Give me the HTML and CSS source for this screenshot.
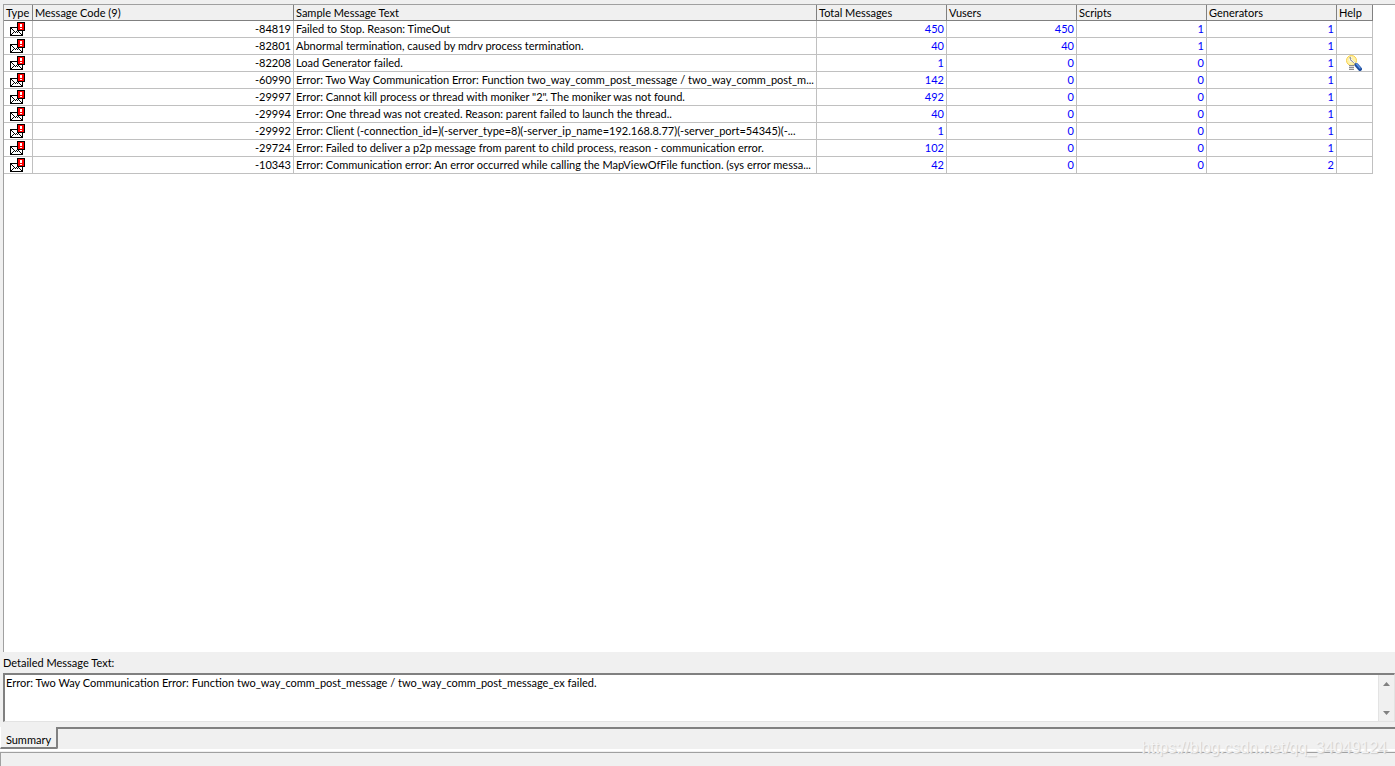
FILE: index.html
```
<!DOCTYPE html>
<html lang="en">
<head>
    <meta charset="UTF-8">
    <meta name="viewport" content="width=device-width, initial-scale=1.0">
    <title>Output - Summary</title>
    <link rel="stylesheet" href="styles.css">
</head>
<body>

    <!-- shared icons -->
    <svg class="sprite" aria-hidden="true">
        <symbol id="icon-error" viewBox="0 0 16 16">
            <g shape-rendering="crispEdges">
                <path fill="#000" d="M1 6h13v9H1z"/>
                <path fill="#fff" d="M2 7h11v7H2z"/>
                <path fill="#000" d="M2 7h1v1H2zM3 8h1v1H3zM4 9h1v1H4zM5 10h1v1H5zM6 11h1v1H6zM7 10h1v1H7zM8 11h1v1H8zM9 10h1v1H9zM4 11h1v1H4zM3 12h1v1H3zM2 13h1v1H2zM10 11h1v1H10zM11 12h1v1H11zM12 13h1v1H12z"/>
                <path fill="#000" d="M8 1h8v9H8z"/>
                <path fill="#f00" d="M9 2h6v7H9z"/>
                <path fill="#fff" d="M11 3h2v3h-2zM11 7h2v1h-2z"/>
            </g>
        </symbol>
        <symbol id="icon-help" viewBox="0 0 16 16">
            <circle cx="5.500" cy="5.500" r="5" fill="#fff2a8" stroke="#f7cf4a"/>
            <path fill="#fffdf0" d="M3 4q1-2 3-2v5H4z"/>
            <path fill="#8c8c8c" d="M3 10h5v5H3z"/>
            <path stroke="#ddd" d="M3 11.500h5M3 13.500h5"/>
            <path fill="none" stroke="#999" stroke-width="1.500" d="M4 2l1 3 5 4"/>
            <path stroke="#f4f4f4" d="M5 4l4 4"/>
            <path stroke="#1d4c9c" stroke-width="4" stroke-linecap="round" d="M10.500 10l3.500 4"/>
            <path stroke="#5b93e6" stroke-width="1.500" stroke-linecap="round" d="M10.500 9l3.500 4"/>
        </symbol>
    </svg>

    <main class="messages">
        <table class="message-table">
            <colgroup>
                <col class="col-type">
                <col class="col-code">
                <col class="col-text">
                <col class="col-count">
                <col class="col-count">
                <col class="col-count">
                <col class="col-count">
                <col class="col-help">
            </colgroup>
            <thead>
                <tr>
                    <th>Type</th>
                    <th>Message Code (9)</th>
                    <th>Sample Message Text</th>
                    <th>Total Messages</th>
                    <th>Vusers</th>
                    <th>Scripts</th>
                    <th>Generators</th>
                    <th>Help</th>
                </tr>
            </thead>
            <tbody>
                <tr>
                    <td class="type"><svg class="icon"><use href="#icon-error"/></svg></td>
                    <td class="code">-84819</td>
                    <td>Failed to Stop. Reason: TimeOut</td>
                    <td class="num">450</td>
                    <td class="num">450</td>
                    <td class="num">1</td>
                    <td class="num">1</td>
                    <td></td>
                </tr>
                <tr>
                    <td class="type"><svg class="icon"><use href="#icon-error"/></svg></td>
                    <td class="code">-82801</td>
                    <td>Abnormal termination, caused by mdrv process termination.</td>
                    <td class="num">40</td>
                    <td class="num">40</td>
                    <td class="num">1</td>
                    <td class="num">1</td>
                    <td></td>
                </tr>
                <tr>
                    <td class="type"><svg class="icon"><use href="#icon-error"/></svg></td>
                    <td class="code">-82208</td>
                    <td>Load Generator failed.</td>
                    <td class="num">1</td>
                    <td class="num">0</td>
                    <td class="num">0</td>
                    <td class="num">1</td>
                    <td class="help"><svg class="icon"><use href="#icon-help"/></svg></td>
                </tr>
                <tr>
                    <td class="type"><svg class="icon"><use href="#icon-error"/></svg></td>
                    <td class="code">-60990</td>
                    <td>Error: Two Way Communication Error: Function two_way_comm_post_message / two_way_comm_post_m...</td>
                    <td class="num">142</td>
                    <td class="num">0</td>
                    <td class="num">0</td>
                    <td class="num">1</td>
                    <td></td>
                </tr>
                <tr>
                    <td class="type"><svg class="icon"><use href="#icon-error"/></svg></td>
                    <td class="code">-29997</td>
                    <td>Error: Cannot kill process or thread with moniker "2". The moniker was not found.</td>
                    <td class="num">492</td>
                    <td class="num">0</td>
                    <td class="num">0</td>
                    <td class="num">1</td>
                    <td></td>
                </tr>
                <tr>
                    <td class="type"><svg class="icon"><use href="#icon-error"/></svg></td>
                    <td class="code">-29994</td>
                    <td>Error: One thread was not created. Reason: parent failed to launch the thread..</td>
                    <td class="num">40</td>
                    <td class="num">0</td>
                    <td class="num">0</td>
                    <td class="num">1</td>
                    <td></td>
                </tr>
                <tr>
                    <td class="type"><svg class="icon"><use href="#icon-error"/></svg></td>
                    <td class="code">-29992</td>
                    <td>Error: Client (-connection_id=)(-server_type=8)(-server_ip_name=192.168.8.77)(-server_port=54345)(-...</td>
                    <td class="num">1</td>
                    <td class="num">0</td>
                    <td class="num">0</td>
                    <td class="num">1</td>
                    <td></td>
                </tr>
                <tr>
                    <td class="type"><svg class="icon"><use href="#icon-error"/></svg></td>
                    <td class="code">-29724</td>
                    <td>Error: Failed to deliver a p2p message from parent to child process, reason - communication error.</td>
                    <td class="num">102</td>
                    <td class="num">0</td>
                    <td class="num">0</td>
                    <td class="num">1</td>
                    <td></td>
                </tr>
                <tr>
                    <td class="type"><svg class="icon"><use href="#icon-error"/></svg></td>
                    <td class="code">-10343</td>
                    <td>Error: Communication error: An error occurred while calling the MapViewOfFile function. (sys error messa...</td>
                    <td class="num">42</td>
                    <td class="num">0</td>
                    <td class="num">0</td>
                    <td class="num">2</td>
                    <td></td>
                </tr>
            </tbody>
        </table>
    </main>

    <section class="detail">
        <label for="detailText">Detailed Message Text:</label>
        <div class="detail-box">
            <textarea id="detailText" readonly>Error: Two Way Communication Error: Function two_way_comm_post_message / two_way_comm_post_message_ex failed.</textarea>
            <div class="scrollbar">
                <button type="button" aria-label="Scroll up"><svg class="arrow" viewBox="0 0 7 4"><path d="M0 4l3.500-4L7 4z"/></svg></button>
                <button type="button" aria-label="Scroll down"><svg class="arrow" viewBox="0 0 7 4"><path d="M0 0l3.500 4L7 0z"/></svg></button>
            </div>
        </div>
    </section>

    <nav class="tabs">
        <button type="button" class="tab">Summary</button>
        <div class="tab-rest"></div>
    </nav>

    <footer class="status"></footer>
    <div class="watermark">https://blog.csdn.net/qq_34049124</div>

</body>
</html>
```
FILE: styles.css
```
* {
    box-sizing: border-box;
}
body {
    position: relative;
    display: flex;
    flex-direction: column;
    height: 100vh;
    margin: 0;
    padding-top: 4px;
    overflow: hidden;
    background-color: #f0f0f0;
    color: #000;
    font-family: Lato, "Liberation Sans", Arial, sans-serif;
    font-size: 11px;
    line-height: 16px;
}
button, textarea {
    font: inherit;
    color: inherit;
}
.sprite {
    position: absolute;
    width: 0;
    height: 0;
}
.messages {
    flex: 1;
    min-height: 0;
    margin-left: 3px;
    overflow: hidden;
    background-color: #fff;
    border-top: 1px solid #a0a0a0;
    border-left: 1px solid #a0a0a0;
}
.message-table {
    width: 1369px;
    table-layout: fixed;
    border-collapse: separate;
    border-spacing: 0;
}
.col-type {
    width: 29px;
}
.col-code {
    width: 261px;
}
.col-text {
    width: 523px;
}
.col-count {
    width: 130px;
}
.col-help {
    width: 36px;
}
th, td {
    height: 17px;
    padding: 0 2px;
    overflow: hidden;
    white-space: nowrap;
    text-align: left;
    border-right: 1px solid #c0c0c0;
    border-bottom: 1px solid #c0c0c0;
}
th {
    height: 16px;
    line-height: 15px;
    font-weight: normal;
    background-color: #f0f0f0;
    border-color: #808080;
}
.code, .num {
    text-align: right;
}
.num {
    color: #0000ff;
}
.type, .help {
    padding: 0;
}
.icon {
    display: block;
    width: 16px;
    height: 16px;
    margin-left: 5px;
}
.help .icon {
    margin-left: 9px;
}
.detail {
    padding: 3px 0 5px 3px;
}
.detail label {
    display: block;
    margin-bottom: 2px;
}
.detail-box {
    display: flex;
    height: 49px;
    background-color: #fff;
    border: 1px solid #e3e3e3;
    border-top: 2px solid #808080;
    border-left: 2px solid #808080;
}
.detail-box textarea {
    flex: 1;
    padding: 0 1px;
    overflow: hidden;
    resize: none;
    border: none;
    outline: none;
    background-color: #fff;
}
.scrollbar {
    display: flex;
    flex-direction: column;
    justify-content: space-between;
    width: 16px;
    background-color: #f0f0f0;
    border-left: 1px solid #e3e3e3;
}
.scrollbar button {
    display: flex;
    align-items: center;
    justify-content: center;
    height: 17px;
    padding: 0;
    border: none;
    background-color: #f0f0f0;
}
.arrow {
    width: 7px;
    height: 4px;
    fill: #808080;
}
.tabs {
    display: flex;
    height: 22px;
}
.tab {
    width: 58px;
    padding: 5px 0 0;
    border: none;
    border-left: 1px solid #fff;
    border-right: 2px solid #808080;
    border-bottom: 2px solid #808080;
    border-radius: 0 0 2px 0;
    background-color: #f0f0f0;
}
.tab-rest {
    flex: 1;
    border-top: 2px solid #808080;
}
.status {
    height: 17px;
    border-top: 2px solid #fff;
}
.status::before {
    content: "";
    display: block;
    height: 15px;
    margin-top: 1px;
    border-top: 1px solid #a0a0a0;
    border-left: 1px solid #a0a0a0;
}
.watermark {
    position: absolute;
    right: 8px;
    bottom: 9px;
    color: #f4f4f4;
    font-family: "Liberation Sans", Arial, sans-serif;
    font-size: 16px;
    line-height: 18px;
    text-shadow: 1px 1px 1px #ccc;
    pointer-events: none;
}
```
